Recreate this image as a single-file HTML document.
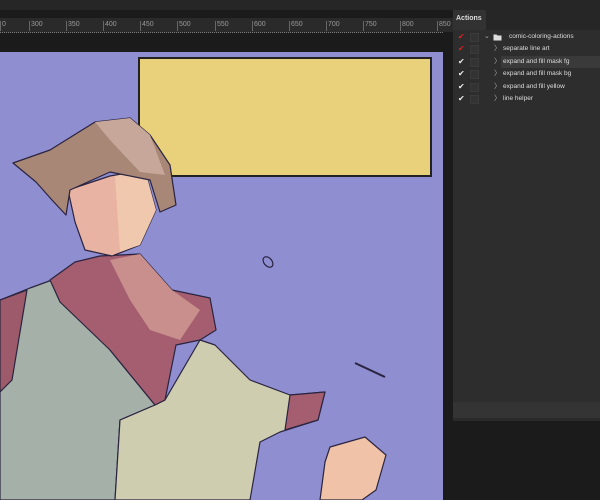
<html><head><style>
body{margin:0;width:600px;height:500px;overflow:hidden;background:#1b1b1b;font-family:"Liberation Sans",sans-serif;position:relative}
.abs{position:absolute}
.ruler{left:0;top:18px;width:453px;height:14px;background:#2a2a2a;border-bottom:1px dotted #777}
.rl{position:absolute;top:3px;font-size:7px;color:#999;border-left:1px solid #666;padding-left:1px;height:10px;line-height:8px}
.panel{left:453px;top:10px;width:147px;height:411px;background:#2d2d2d}
.row{position:absolute;left:0;width:147px;height:12px;font-size:6.5px;color:#ddd;line-height:12px}
.ck{position:absolute;left:5px;font-size:8px}
.bx{position:absolute;left:17px;top:2px;width:7px;height:7px;background:#333;border:1px solid #3a3a3a}
.chev{position:absolute;left:41px;color:#aaa;font-size:7px}
.tx{position:absolute;left:50px}
</style></head><body>
<div class="abs" style="left:0;top:0;width:600px;height:10px;background:#262626"></div>
<div class="abs ruler">
<span class="rl" style="left:0">0</span><span class="rl" style="left:29px">300</span><span class="rl" style="left:66px">350</span><span class="rl" style="left:103px">400</span><span class="rl" style="left:140px">450</span><span class="rl" style="left:177px">500</span><span class="rl" style="left:215px">550</span><span class="rl" style="left:252px">600</span><span class="rl" style="left:289px">650</span><span class="rl" style="left:326px">700</span><span class="rl" style="left:363px">750</span><span class="rl" style="left:400px">800</span><span class="rl" style="left:437px">850</span>
</div>
<svg class="abs" style="left:0;top:52px" width="443" height="448" viewBox="0 52 443 448">
<rect x="0" y="52" width="443" height="448" fill="#8f8ed1"/>
<rect x="139" y="58" width="292" height="118" fill="#e9d07a" stroke="#222" stroke-width="2"/>
<g stroke="#2a2440" stroke-width="1.2" stroke-linejoin="round">
<polygon points="0,300 30,288 52,280 110,350 155,405 120,420 115,500 0,500" fill="#a4b0a8"/>
<polygon points="0,300 27,290 12,380 0,392" fill="#9c5a6a"/>
<polygon points="155,405 165,400 200,340 215,345 250,380 290,395 325,392 318,420 280,432 260,442 250,500 115,500 120,420" fill="#cfcdb0"/>
<polygon points="50,280 75,262 100,256 140,254 172,290 210,298 216,330 200,340 176,345 165,400 155,405 110,350 60,302" fill="#a45e70"/>
<polygon points="110,260 140,254 172,290 200,310 180,340 150,330 130,300" fill="#c98f8c" stroke="none"/>
<polygon points="290,395 325,392 318,420 285,430" fill="#a45e70"/>
<polygon points="68,190 110,176 145,170 156,210 140,245 112,256 85,250 75,222" fill="#e9b3a4"/>
<polygon points="115,176 145,170 156,210 140,245 120,252" fill="#f0c8ae" stroke="none"/>
<polygon points="13,163 50,150 95,122 130,118 150,135 170,165 176,205 160,212 150,180 110,172 70,190 66,215 52,200 36,182" fill="#a88776"/>
<polygon points="95,122 130,118 150,135 165,175 140,172 110,140" fill="#c7a79a" stroke="none"/>
<polygon points="330,447 365,437 386,455 376,490 362,500 320,500 325,462" fill="#f0c2a8"/>
<ellipse cx="268" cy="262" rx="4" ry="6" fill="none" transform="rotate(-40 268 262)"/>
<line x1="355" y1="363" x2="385" y2="377" stroke-width="2"/>
</g>
</svg>
<div class="abs" style="left:443px;top:32px;width:10px;height:468px;background:#1b1b1b"></div>
<div class="abs panel">
<div class="abs" style="left:0;top:0;width:147px;height:20px;background:#262626"></div>
<div class="abs" style="left:0;top:0;width:33px;height:20px;background:#323232;color:#ddd;font-size:7px;font-weight:bold;line-height:18px;padding-left:3px;box-sizing:border-box">Actions</div>
<div class="row" style="top:21px"><span class="ck" style="color:#e02020">✔</span><span class="bx"></span><span class="abs" style="left:31px;color:#aaa;font-size:7px">⌄</span><svg class="abs" style="left:40px;top:3px" width="9" height="7"><path d="M0.5 0.5h3l1 1h4v5h-8z" fill="#ddd"/></svg><span class="tx" style="left:56px">comic-coloring-actions</span></div>
<div class="row" style="top:33px"><span class="ck" style="color:#e02020">✔</span><span class="bx"></span><span class="chev">〉</span><span class="tx">separate line art</span></div>
<div class="row" style="top:46px"><span class="ck" style="color:#eee">✔</span><span class="bx"></span><span class="chev">〉</span><span class="abs" style="left:48px;top:0;width:99px;height:12px;background:#3a3a3a"></span><span class="tx">expand and fill mask fg</span></div>
<div class="row" style="top:58px"><span class="ck" style="color:#eee">✔</span><span class="bx"></span><span class="chev">〉</span><span class="tx">expand and fill mask bg</span></div>
<div class="row" style="top:71px"><span class="ck" style="color:#eee">✔</span><span class="bx"></span><span class="chev">〉</span><span class="tx">expand and fill yellow</span></div>
<div class="row" style="top:83px"><span class="ck" style="color:#eee">✔</span><span class="bx"></span><span class="chev">〉</span><span class="tx">line helper</span></div>
<div class="abs" style="left:0;top:392px;width:147px;height:16px;background:#343434"></div>
<div class="abs" style="left:0;top:408px;width:147px;height:3px;background:#2a2a2a"></div>
</div>
</body></html>
